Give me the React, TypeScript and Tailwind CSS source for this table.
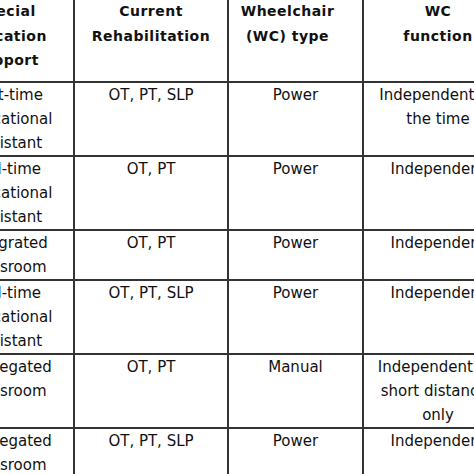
import React from "react";

type Row = { a: string[]; b: string; c: string; d: string[] };

const rows: Row[] = [
  { a: ["Part-time", "educational", "assistant"], b: "OT, PT, SLP", c: "Power", d: ["Independent all", "the time"] },
  { a: ["Full-time", "educational", "assistant"], b: "OT, PT", c: "Power", d: ["Independent"] },
  { a: ["Integrated", "classroom"], b: "OT, PT", c: "Power", d: ["Independent"] },
  { a: ["Full-time", "educational", "assistant"], b: "OT, PT, SLP", c: "Power", d: ["Independent"] },
  { a: ["Segregated", "classroom"], b: "OT, PT", c: "Manual", d: ["Independent for", "short distances", "only"] },
  { a: ["Segregated", "classroom"], b: "OT, PT, SLP", c: "Power", d: ["Independent"] },
];

const cellA = "w-[137px] shrink-0 border-r-2 border-[#333] text-center";
const cellB = "w-[154px] shrink-0 border-r-2 border-[#333] text-center";
const cellC = "w-[135px] shrink-0 border-r-2 border-[#333] text-center";
const cellD = "w-[148px] shrink-0 text-center";

function Lines({ lines }: { lines: string[] }) {
  return (
    <>
      {lines.map((l, i) => (
        <div key={i} className="whitespace-nowrap">
          {l}
        </div>
      ))}
    </>
  );
}

export default function App() {
  return (
    <div className="w-[474px] h-[474px] overflow-hidden bg-white">
      <div
        className="ml-[-62px] mt-[-2px] w-[574px] text-[#111]"
        style={{ fontFamily: '"DejaVu Sans", Verdana, sans-serif' }}
      >
        <div className="flex h-[85px] border-b-2 border-[#333] pt-[1px] text-[14px] font-bold leading-[24.5px] tracking-[0.5px]">
          <div className={cellA}>
            <Lines lines={["Special", "Education", "Support"]} />
          </div>
          <div className={cellB}>
            <Lines lines={["Current", "Rehabilitation"]} />
          </div>
          <div className={`${cellC} pr-[16px]`}>
            <Lines lines={["Wheelchair", "(WC) type"]} />
          </div>
          <div className={cellD}>
            <Lines lines={["WC", "function"]} />
          </div>
        </div>
        {rows.map((r, i) => (
          <div
            key={i}
            className="flex border-b-2 border-[#333] text-[15px] leading-[24px]"
          >
            <div className={`${cellA} pl-[6px]`}>
              <Lines lines={r.a} />
            </div>
            <div className={cellB}>
              <Lines lines={[r.b]} />
            </div>
            <div className={cellC}>
              <Lines lines={[r.c]} />
            </div>
            <div className={cellD}>
              <Lines lines={r.d} />
            </div>
          </div>
        ))}
      </div>
    </div>
  );
}
